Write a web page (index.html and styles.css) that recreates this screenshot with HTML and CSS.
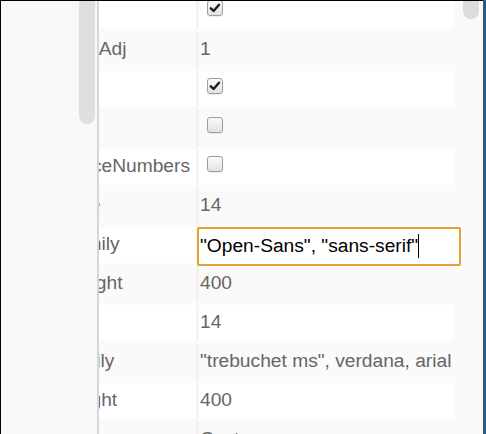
FILE: index.html
```html
<!DOCTYPE html>
<html lang="en">
<head>
<meta charset="utf-8">
<title>Property grid</title>
<link rel="stylesheet" href="styles.css">
</head>
<body>
<div class="window">
  <div class="frame">
    <aside class="side">
      <div class="side-thumb"></div>
    </aside>
    <main class="grid-pane">
      <div class="rows">
        <div class="row">
          <div class="key">visible</div>
          <div class="val"><span class="check on"><svg viewBox="0 0 16 16" width="14" height="14"><path d="M3.2 8.4 L6.4 11.4 L12.6 4.2" fill="none" stroke="#1e1e1e" stroke-width="2.8" stroke-linecap="round" stroke-linejoin="round"/></svg></span></div>
        </div>
        <div class="row">
          <div class="key">axisTitleAdj</div>
          <div class="val">1</div>
        </div>
        <div class="row">
          <div class="key">ticks</div>
          <div class="val"><span class="check on"><svg viewBox="0 0 16 16" width="14" height="14"><path d="M3.2 8.4 L6.4 11.4 L12.6 4.2" fill="none" stroke="#1e1e1e" stroke-width="2.8" stroke-linecap="round" stroke-linejoin="round"/></svg></span></div>
        </div>
        <div class="row">
          <div class="key">inverse</div>
          <div class="val"><span class="check"></span></div>
        </div>
        <div class="row">
          <div class="key">axisForceNumbers</div>
          <div class="val"><span class="check"></span></div>
        </div>
        <div class="row">
          <div class="key">axisSize</div>
          <div class="val">14</div>
        </div>
        <div class="row">
          <div class="key">axisFamily</div>
          <div class="val">
            <div class="editor"><span class="editor-text">"Open-Sans", "sans-serif"</span><span class="caret"></span></div>
          </div>
        </div>
        <div class="row">
          <div class="key">axisWeight</div>
          <div class="val">400</div>
        </div>
        <div class="row">
          <div class="key">tickSize</div>
          <div class="val">14</div>
        </div>
        <div class="row">
          <div class="key">tickFamily</div>
          <div class="val">"trebuchet ms", verdana, arial</div>
        </div>
        <div class="row">
          <div class="key">tickWeight</div>
          <div class="val">400</div>
        </div>
        <div class="row">
          <div class="key">format</div>
          <div class="val">Custom</div>
        </div>
      </div>
      <div class="vscroll"><div class="vthumb"></div></div>
    </main>
  </div>
  <div class="edge"></div>
</div>
</body>
</html>
```

FILE: styles.css
```css
html, body {
  margin: 0;
  padding: 0;
  width: 486px;
  height: 434px;
  overflow: hidden;
  background: #fafafa;
}

body {
  font-family: "Liberation Sans", Arial, sans-serif;
  font-size: 19.2px;
  color: #666666;
}

.window {
  display: flex;
  width: 486px;
  height: 434px;
}

.frame {
  flex: 1;
  min-width: 0;
  display: flex;
  border-top: 1px solid #000000;
  border-left: 1px solid #000000;
  overflow: hidden;
}

.edge {
  width: 3px;
  background: #2a5a82;
}

.side {
  width: 98px;
  flex-shrink: 0;
  box-sizing: border-box;
  background: #f6f8fa;
  border-right: 2px solid #d7d7d7;
  padding-right: 2px;
  display: flex;
  justify-content: flex-end;
  align-items: flex-start;
}

.side-thumb {
  width: 16px;
  height: 123px;
  background: #dfdfdf;
  border-radius: 0 0 8px 8px;
}

.grid-pane {
  flex: 1;
  min-width: 0;
  display: flex;
  background: #fafafa;
  overflow: hidden;
}

.rows {
  width: 355px;
  flex-shrink: 0;
  margin-top: -8px;
  display: flex;
  flex-direction: column;
  gap: 3px;
}

.row {
  height: 36px;
  flex-shrink: 0;
  display: flex;
  background: #fafafa;
}

.row:nth-child(odd) {
  background: #ffffff;
}

.key {
  width: 97px;
  flex-shrink: 0;
  border-right: 3px solid #f2f2f2;
  overflow: hidden;
  white-space: nowrap;
  text-indent: -70px;
  box-sizing: content-box;
  padding-bottom: 2px;
  display: flex;
  align-items: center;
}

.val {
  flex: 1;
  min-width: 0;
  position: relative;
  padding-left: 1px;
  padding-bottom: 2px;
  white-space: nowrap;
  display: flex;
  align-items: center;
}

.check {
  width: 16px;
  height: 16px;
  box-sizing: border-box;
  margin-left: 7px;
  margin-bottom: 4px;
  border: 1px solid #9e9e9e;
  border-radius: 3px;
  background: linear-gradient(#fbfbfb, #e2e2e2);
  box-shadow: 0 1px 1px rgba(0, 0, 0, 0.08);
  display: flex;
  align-items: center;
  justify-content: center;
}

.editor {
  position: absolute;
  left: -2px;
  top: 0;
  width: 264px;
  height: 39px;
  box-sizing: border-box;
  border: 2px solid #e4a12f;
  border-radius: 2px;
  background: #ffffff;
  color: #000000;
  padding-left: 1px;
  padding-bottom: 2px;
  display: flex;
  align-items: center;
}

.editor-text {
  white-space: pre;
}

.caret {
  width: 1px;
  height: 24px;
  background: #000000;
  margin-left: 0;
}

.vscroll {
  flex: 1;
  padding-left: 9px;
}

.vthumb {
  width: 16px;
  height: 18px;
  background: #dcdcdc;
  border-radius: 0 0 8px 8px;
}
```
